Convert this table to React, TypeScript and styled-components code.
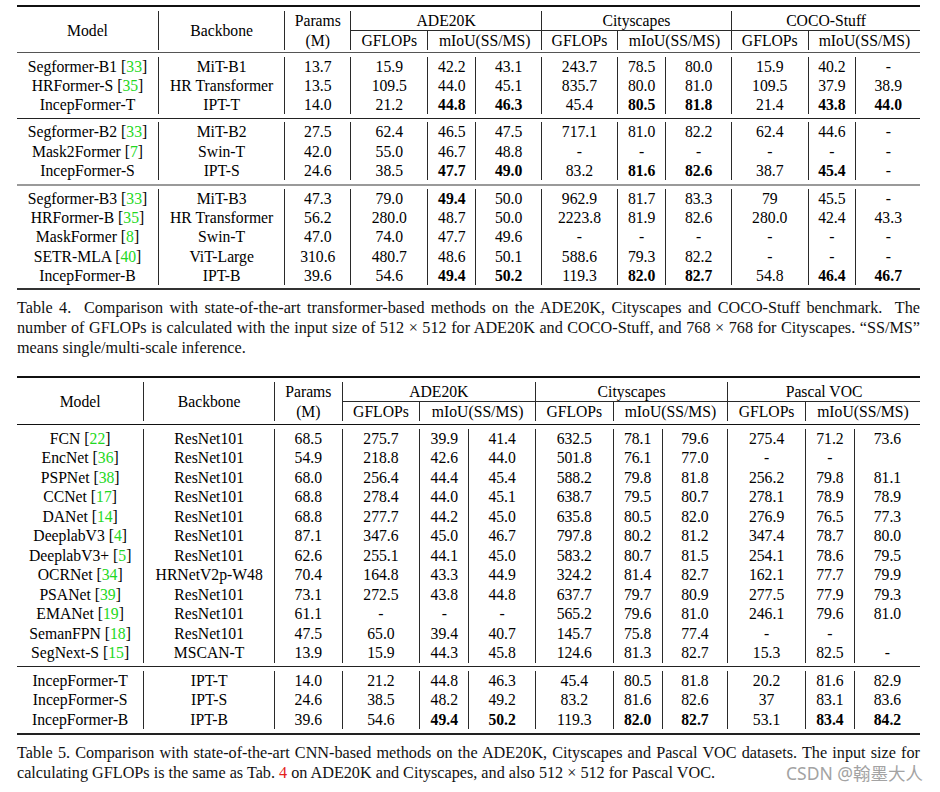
import React from "react";
import styled, { createGlobalStyle } from "styled-components";

const LINE = "#2a2a2a";

const GlobalStyle = createGlobalStyle`
  html, body {
    margin: 0;
    padding: 0;
    background: #fff;
  }
  body {
    font-family: "Liberation Serif", "Times New Roman", serif;
    color: #000;
  }
`;

type Group = { sep: string; pad: number; rows: string[][] };
type TableSpec = {
  cols: number[];
  rowH: number;
  headPadB: number;
  headBorder: string;
  bottom: string;
  datasets: string[];
  groups: Group[];
};

const Page = styled.div`
  position: relative;
  width: 903px;
  height: 787px;
  padding: 5px 17px 0;
  overflow: hidden;
`;

const TableBox = styled.div<{ $mt: number; $bottom: string }>`
  margin-top: ${(p) => p.$mt}px;
  border-top: 2px solid #111;
  border-bottom: ${(p) => p.$bottom};
  font-size: 15.7px;
`;

const Head = styled.div<{ $cols: string; $border: string; $padB: number }>`
  display: grid;
  grid-template-columns: ${(p) => p.$cols};
  grid-template-rows: 20px 19px;
  padding: 4px 0 ${(p) => p.$padB}px;
  border-bottom: ${(p) => p.$border};
`;

const HeadCell = styled.div<{ $col: string; $row: string; $line?: boolean; $rule?: boolean }>`
  grid-column: ${(p) => p.$col};
  grid-row: ${(p) => p.$row};
  display: flex;
  flex-direction: column;
  align-items: center;
  justify-content: center;
  line-height: 20px;
  white-space: nowrap;
  border-left: ${(p) => (p.$line ? `1px solid ${LINE}` : "none")};
  border-bottom: ${(p) => (p.$rule ? `1px solid ${LINE}` : "none")};
`;

const Body = styled.div<{ $sep: string; $pad: number }>`
  padding: ${(p) => p.$pad}px 0;
  border-top: ${(p) => p.$sep};
`;

const Row = styled.div<{ $cols: string; $h: number }>`
  display: grid;
  grid-template-columns: ${(p) => p.$cols};
  height: ${(p) => p.$h}px;
  line-height: ${(p) => p.$h}px;
`;

const Cell = styled.div<{ $bold?: boolean }>`
  text-align: center;
  white-space: nowrap;
  font-weight: ${(p) => (p.$bold ? 700 : 400)};

  & + & {
    border-left: 1px solid ${LINE};
  }
`;

const Cite = styled.span`
  color: #22d822;
`;

const Caption = styled.div<{ $mt: number }>`
  margin-top: ${(p) => p.$mt}px;
  font-size: 16.2px;
  line-height: 20px;
  color: #111;
`;

const CapLine = styled.div<{ $last?: boolean }>`
  text-align: justify;
  text-align-last: ${(p) => (p.$last ? "left" : "justify")};
`;

const Ref = styled.span`
  color: #e3201b;
`;

const Watermark = styled.div`
  position: absolute;
  right: 14px;
  top: 761px;
  font-family: "Noto Sans", "Noto Sans CJK SC", sans-serif;
  font-size: 17.5px;
  line-height: 24px;
  color: #a3a3a3;
  text-shadow: 0 0 1px #fff;
`;

const renderModel = (text: string) => {
  const m = text.match(/^(.*) \[(\d+)\]$/);
  if (!m) return text;
  return (
    <>
      {m[1]} [<Cite>{m[2]}</Cite>]
    </>
  );
};

const table4: TableSpec = {
  cols: [141, 126.3, 66, 77, 48, 65.7, 76, 48.3, 65.7, 76.6, 47.7, 65],
  rowH: 19.3,
  headPadB: 2,
  headBorder: "1px solid #555",
  bottom: "2px solid #333",
  datasets: ["ADE20K", "Cityscapes", "COCO-Stuff"],
  groups: [
    {
      sep: "none",
      pad: 3.5,
      rows: [
        ["Segformer-B1 [33]", "MiT-B1", "13.7", "15.9", "42.2", "43.1", "243.7", "78.5", "80.0", "15.9", "40.2", "-"],
        ["HRFormer-S [35]", "HR Transformer", "13.5", "109.5", "44.0", "45.1", "835.7", "80.0", "81.0", "109.5", "37.9", "38.9"],
        ["IncepFormer-T", "IPT-T", "14.0", "21.2", "*44.8", "*46.3", "45.4", "*80.5", "*81.8", "21.4", "*43.8", "*44.0"],
      ],
    },
    {
      sep: "1px solid #222",
      pad: 3.5,
      rows: [
        ["Segformer-B2 [33]", "MiT-B2", "27.5", "62.4", "46.5", "47.5", "717.1", "81.0", "82.2", "62.4", "44.6", "-"],
        ["Mask2Former [7]", "Swin-T", "42.0", "55.0", "46.7", "48.8", "-", "-", "-", "-", "-", "-"],
        ["IncepFormer-S", "IPT-S", "24.6", "38.5", "*47.7", "*49.0", "83.2", "*81.6", "*82.6", "38.7", "*45.4", "-"],
      ],
    },
    {
      sep: "2px solid #9a9a9a",
      pad: 3,
      rows: [
        ["Segformer-B3 [33]", "MiT-B3", "47.3", "79.0", "*49.4", "50.0", "962.9", "81.7", "83.3", "79", "45.5", "-"],
        ["HRFormer-B [35]", "HR Transformer", "56.2", "280.0", "48.7", "50.0", "2223.8", "81.9", "82.6", "280.0", "42.4", "43.3"],
        ["MaskFormer [8]", "Swin-T", "47.0", "74.0", "47.7", "49.6", "-", "-", "-", "-", "-", "-"],
        ["SETR-MLA [40]", "ViT-Large", "310.6", "480.7", "48.6", "50.1", "588.6", "79.3", "82.2", "-", "-", "-"],
        ["IncepFormer-B", "IPT-B", "39.6", "54.6", "*49.4", "*50.2", "119.3", "*82.0", "*82.7", "54.8", "*46.4", "*46.7"],
      ],
    },
  ],
};

const table5: TableSpec = {
  cols: [126.3, 130.7, 67.7, 77.6, 49, 66.7, 77.7, 49, 65.6, 77.7, 49, 66],
  rowH: 19.5,
  headPadB: 3,
  headBorder: "1px solid #111",
  bottom: "2px solid #222",
  datasets: ["ADE20K", "Cityscapes", "Pascal VOC"],
  groups: [
    {
      sep: "none",
      pad: 3.5,
      rows: [
        ["FCN [22]", "ResNet101", "68.5", "275.7", "39.9", "41.4", "632.5", "78.1", "79.6", "275.4", "71.2", "73.6"],
        ["EncNet [36]", "ResNet101", "54.9", "218.8", "42.6", "44.0", "501.8", "76.1", "77.0", "-", "-", ""],
        ["PSPNet [38]", "ResNet101", "68.0", "256.4", "44.4", "45.4", "588.2", "79.8", "81.8", "256.2", "79.8", "81.1"],
        ["CCNet [17]", "ResNet101", "68.8", "278.4", "44.0", "45.1", "638.7", "79.5", "80.7", "278.1", "78.9", "78.9"],
        ["DANet [14]", "ResNet101", "68.8", "277.7", "44.2", "45.0", "635.8", "80.5", "82.0", "276.9", "76.5", "77.3"],
        ["DeeplabV3 [4]", "ResNet101", "87.1", "347.6", "45.0", "46.7", "797.8", "80.2", "81.2", "347.4", "78.7", "80.0"],
        ["DeeplabV3+ [5]", "ResNet101", "62.6", "255.1", "44.1", "45.0", "583.2", "80.7", "81.5", "254.1", "78.6", "79.5"],
        ["OCRNet [34]", "HRNetV2p-W48", "70.4", "164.8", "43.3", "44.9", "324.2", "81.4", "82.7", "162.1", "77.7", "79.9"],
        ["PSANet [39]", "ResNet101", "73.1", "272.5", "43.8", "44.8", "637.7", "79.7", "80.9", "277.5", "77.9", "79.3"],
        ["EMANet [19]", "ResNet101", "61.1", "-", "-", "-", "565.2", "79.6", "81.0", "246.1", "79.6", "81.0"],
        ["SemanFPN [18]", "ResNet101", "47.5", "65.0", "39.4", "40.7", "145.7", "75.8", "77.4", "-", "-", ""],
        ["SegNext-S [15]", "MSCAN-T", "13.9", "15.9", "44.3", "45.8", "124.6", "81.3", "82.7", "15.3", "82.5", "-"],
      ],
    },
    {
      sep: "1px solid #222",
      pad: 3.5,
      rows: [
        ["IncepFormer-T", "IPT-T", "14.0", "21.2", "44.8", "46.3", "45.4", "80.5", "81.8", "20.2", "81.6", "82.9"],
        ["IncepFormer-S", "IPT-S", "24.6", "38.5", "48.2", "49.2", "83.2", "81.6", "82.6", "37", "83.1", "83.6"],
        ["IncepFormer-B", "IPT-B", "39.6", "54.6", "*49.4", "*50.2", "119.3", "*82.0", "*82.7", "53.1", "*83.4", "*84.2"],
      ],
    },
  ],
};

const ResultTable = ({ spec, mt }: { spec: TableSpec; mt: number }) => {
  const cols = spec.cols.map((c) => `${c}px`).join(" ");

  return (
    <TableBox $mt={mt} $bottom={spec.bottom}>
      <Head $cols={cols} $border={spec.headBorder} $padB={spec.headPadB}>
        <HeadCell $col="1" $row="1 / 3">
          Model
        </HeadCell>
        <HeadCell $col="2" $row="1 / 3" $line>
          Backbone
        </HeadCell>
        <HeadCell $col="3" $row="1 / 3" $line>
          <span>Params</span>
          <span>(M)</span>
        </HeadCell>
        {spec.datasets.map((name, i) => {
          const s = 4 + i * 3;
          return (
            <React.Fragment key={name}>
              <HeadCell $col={`${s} / ${s + 3}`} $row="1" $line $rule>
                {name}
              </HeadCell>
              <HeadCell $col={`${s}`} $row="2" $line>
                GFLOPs
              </HeadCell>
              <HeadCell $col={`${s + 1} / ${s + 3}`} $row="2" $line>
                mIoU(SS/MS)
              </HeadCell>
            </React.Fragment>
          );
        })}
      </Head>
      {spec.groups.map((group, gi) => (
        <Body key={gi} $sep={group.sep} $pad={group.pad}>
          {group.rows.map((row, ri) => (
            <Row key={ri} $cols={cols} $h={spec.rowH}>
              {row.map((value, ci) => {
                const bold = value.startsWith("*");
                const text = bold ? value.slice(1) : value;
                return (
                  <Cell key={ci} $bold={bold}>
                    {ci === 0 ? renderModel(text) : text}
                  </Cell>
                );
              })}
            </Row>
          ))}
        </Body>
      ))}
    </TableBox>
  );
};

const App = () => {
  return (
    <Page>
      <GlobalStyle />
      <ResultTable spec={table4} mt={0} />
      <Caption $mt={8}>
        <CapLine>
          Table 4.&nbsp; Comparison with state-of-the-art transformer-based methods on the ADE20K, Cityscapes and
          COCO-Stuff benchmark.&nbsp; The
        </CapLine>
        <CapLine>
          number of GFLOPs is calculated with the input size of 512 × 512 for ADE20K and COCO-Stuff, and 768 × 768
          for Cityscapes. “SS/MS”
        </CapLine>
        <CapLine $last>means single/multi-scale inference.</CapLine>
      </Caption>

      <ResultTable spec={table5} mt={18} />
      <Caption $mt={8}>
        <CapLine>
          Table 5. Comparison with state-of-the-art CNN-based methods on the ADE20K, Cityscapes and Pascal VOC
          datasets. The input size for
        </CapLine>
        <CapLine $last>
          calculating GFLOPs is the same as Tab. <Ref>4</Ref> on ADE20K and Cityscapes, and also 512 × 512 for
          Pascal VOC.
        </CapLine>
      </Caption>

      <Watermark>CSDN @翰墨大人</Watermark>
    </Page>
  );
};

export default App;
